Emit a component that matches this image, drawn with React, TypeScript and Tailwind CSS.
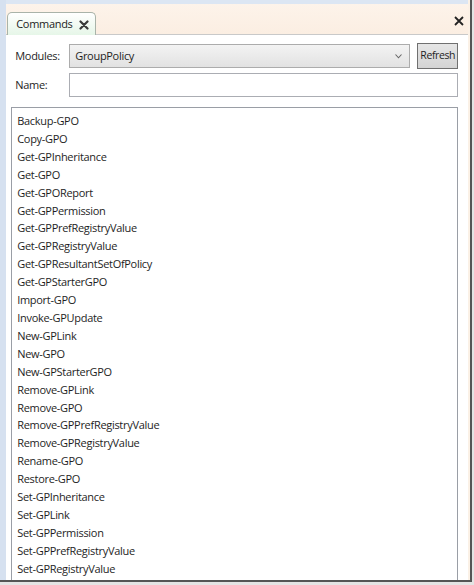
import React from "react";

const items = [
  "Backup-GPO",
  "Copy-GPO",
  "Get-GPInheritance",
  "Get-GPO",
  "Get-GPOReport",
  "Get-GPPermission",
  "Get-GPPrefRegistryValue",
  "Get-GPRegistryValue",
  "Get-GPResultantSetOfPolicy",
  "Get-GPStarterGPO",
  "Import-GPO",
  "Invoke-GPUpdate",
  "New-GPLink",
  "New-GPO",
  "New-GPStarterGPO",
  "Remove-GPLink",
  "Remove-GPO",
  "Remove-GPPrefRegistryValue",
  "Remove-GPRegistryValue",
  "Rename-GPO",
  "Restore-GPO",
  "Set-GPInheritance",
  "Set-GPLink",
  "Set-GPPermission",
  "Set-GPPrefRegistryValue",
  "Set-GPRegistryValue",
];

const font = { fontFamily: '"Open Sans", "Noto Sans", sans-serif' };

export default function App() {
  return (
    <div
      className="w-[474px] h-[585px] overflow-hidden bg-[#e4e4e4] text-[#1e1e1e] text-[11px] tracking-[-0.3px]"
      style={font}
    >
      <div className="w-[472px] h-[582px] flex flex-col border-r-[2px] border-b-[2px] border-[#555555]">
        <div className="flex-1 flex min-h-0">
          {/* left strip */}
          <div className="w-[7px] bg-[#d6e1f0]" />
          {/* main */}
          <div className="flex-1 flex flex-col min-h-0 bg-white">
            <div className="h-[4px] bg-[#dce6f3]" />
            {/* header */}
            <div className="h-[31px] flex items-end bg-gradient-to-b from-[#fdf3ea] to-[#fbeee2] border-b border-[#c9c9c9]">
              <div className="ml-[1px] mb-[-1px] h-[23px] w-[89px] flex items-center pl-[8px] gap-[6px] rounded-t-[5px] border border-b-0 border-[#a9b3a9] bg-gradient-to-b from-[#ffffff] to-[#e6f6e8] text-[#222]">
                <span>Commands</span>
                <svg width="10" height="10" viewBox="0 0 10 10" className="mt-[1px]">
                  <path d="M1.5 1.5 L8.5 8.5 M8.5 1.5 L1.5 8.5" stroke="#3a3a3a" strokeWidth="2.2" strokeLinecap="round" />
                </svg>
              </div>
              <div className="flex-1" />
              <svg width="10" height="10" viewBox="0 0 10 10" className="mr-[4px] mb-[8px]">
                <path d="M1 1 L9 9 M9 1 L1 9" stroke="#222" strokeWidth="1.8" />
              </svg>
            </div>
            {/* body */}
            <div className="flex-1 flex flex-col min-h-0 pl-[5px] pr-[10px] pt-[8px]">
              <div className="flex items-center h-[26px]">
                <span className="w-[58px] pl-[4px]">Modules:</span>
                <div className="w-[341px] h-[24px] flex items-center border border-[#acacac] bg-gradient-to-b from-[#f3f3f3] to-[#e2e2e2] pl-[5px] pr-[7px]">
                  <span className="flex-1">GroupPolicy</span>
                  <svg width="7" height="5" viewBox="0 0 7 5">
                    <path d="M0.5 0.5 L3.5 3.8 L6.5 0.5" fill="none" stroke="#666" strokeWidth="1.1" />
                  </svg>
                </div>
                <div className="ml-[7px] w-[41px] h-[26px] flex items-center justify-center border border-[#707070] bg-gradient-to-b from-[#e6e6e6] to-[#d4d4d4] text-[10.5px] tracking-[-0.4px]">
                  Refresh
                </div>
              </div>
              <div className="flex items-center h-[24px] mt-[4px]">
                <span className="w-[58px] pl-[4px]">Name:</span>
                <div className="w-[389px] h-[24px] border border-[#abadb3] bg-white" />
              </div>
              <div className="mt-[10px] flex-1 min-h-0 overflow-hidden border border-[#9a9ea6] border-b-0 pt-[4px] pl-[5px] w-[447px]">
                {items.map((it) => (
                  <div key={it} className="h-[17.92px] leading-[17.92px] whitespace-nowrap">
                    {it}
                  </div>
                ))}
              </div>
            </div>
          </div>
          <div className="w-[2px] bg-[#fbf1e6]" />
        </div>
      </div>
    </div>
  );
}
